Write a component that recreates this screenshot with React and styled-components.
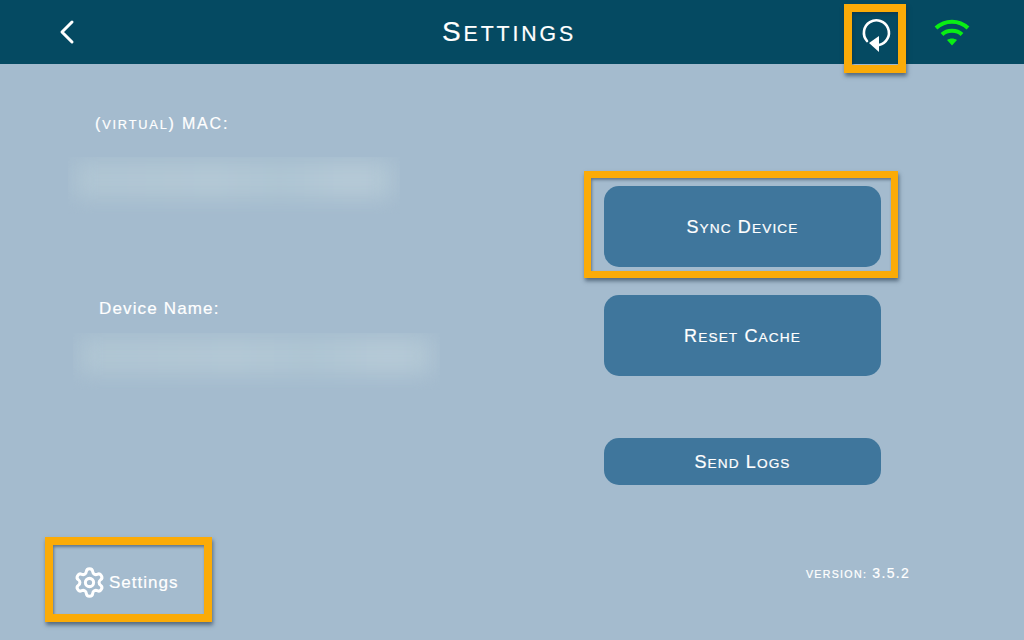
import styled, { createGlobalStyle } from "styled-components";
import { Settings as GearIcon } from "lucide-react";

const GlobalStyle = createGlobalStyle`
  html, body {
    margin: 0;
    padding: 0;
    background: #a4bbce;
  }
  body {
    font-family: "Liberation Sans", Arial, sans-serif;
    color: #fff;
    -webkit-text-stroke: 0.2px #fff;
  }
`;

const Page = styled.div`
  width: 1024px;
  height: 640px;
  overflow: hidden;
  background: #a4bbce;
`;

const Header = styled.header`
  display: flex;
  align-items: center;
  height: 64px;
  padding: 0 54px 0 57px;
  background: #054a62;
`;

const BackButton = styled.div`
  display: flex;
  width: 22px;
  height: 28px;
`;

const Title = styled.h1`
  flex: 1;
  margin: 0;
  padding-left: 79px;
  text-align: center;
  font-size: 28px;
  font-weight: 400;
  letter-spacing: 2.9px;
`;

// small capitals a bit larger than the browser's synthesized ones
const Small = styled.span`
  font-size: ${(props) => props.$scale || 0.76}em;
  text-transform: uppercase;
`;

const Actions = styled.div`
  display: flex;
  align-items: center;
  gap: 42px;
`;

const Anchor = styled.div`
  position: relative;
  display: flex;
`;

const Highlight = styled.div`
  position: absolute;
  inset: ${(props) => props.$inset};
  border: ${(props) => props.$border || 8}px solid #fbab07;
  box-shadow: 1px 3px 4px rgba(20, 40, 60, 0.55),
    inset 1px 2px 3px rgba(20, 40, 60, 0.45);
  pointer-events: none;
`;

const Main = styled.main`
  display: flex;
  height: 576px;
`;

const LeftColumn = styled.section`
  display: flex;
  flex-direction: column;
  width: 604px;
`;

const Label = styled.div`
  margin: ${(props) => props.$margin};
  font-size: ${(props) => props.$size}px;
  line-height: 20px;
  letter-spacing: ${(props) => props.$spacing}px;
`;

const BlurClip = styled.div`
  overflow: hidden;
  width: ${(props) => props.$width}px;
  height: 57px;
  margin: ${(props) => props.$margin};
`;

const BlurBar = styled.div`
  height: 38px;
  margin: 4px 6px 0;
  background: linear-gradient(
    90deg,
    #afc5d3 0%,
    #b3c8d5 45%,
    #aec5d3 65%,
    #b6cad7 88%,
    #afc5d3 100%
  );
  filter: blur(10px);
`;

const SettingsLink = styled.div`
  position: relative;
  display: flex;
  align-items: center;
  gap: 3px;
  width: 104px;
  margin: auto 0 41px 75px;
  font-size: 17px;
  letter-spacing: 1px;

  svg {
    margin-left: -2px;
  }
`;

const RightColumn = styled.section`
  display: flex;
  flex-direction: column;
  width: 277px;
  padding-top: 122px;
`;

const ActionButton = styled.div`
  display: flex;
  align-items: baseline;
  justify-content: center;
  width: 277px;
  height: ${(props) => props.$height}px;
  line-height: ${(props) => props.$height + 2}px;
  margin: ${(props) => props.$margin || 0};
  background: #3f769c;
  border-radius: 15px;
  font-size: 18px;
  letter-spacing: 1.1px;
  white-space: pre;
`;

const Version = styled.div`
  align-self: flex-end;
  margin: 78px -29px 0 0;
  font-size: 14px;
  line-height: 20px;
  letter-spacing: 1.3px;
`;

const RefreshIcon = () => (
  <svg width="32" height="40" viewBox="0 0 32 40" fill="none">
    <path
      d="M7 29 A12.5 12.5 0 1 1 19 33"
      stroke="#fff"
      strokeWidth="2.6"
      strokeLinecap="round"
    />
    <path d="M9 31 L19 24 L19 40 Z" fill="#fff" />
  </svg>
);

const WifiIcon = () => (
  <svg width="36" height="28" viewBox="0 0 36 28" fill="none">
    <path d="M2 10 C11 1.5 25 1.5 34 10" stroke="#0aee14" strokeWidth="4" />
    <path d="M8 16.5 C13 11.5 23 11.5 28 16.5" stroke="#0aee14" strokeWidth="4" />
    <path d="M13 22 C16 20 20 20 23 22 L18 27.5 Z" fill="#0aee14" />
  </svg>
);

export default function App() {
  return (
    <Page>
      <GlobalStyle />
      <Header>
        <BackButton>
          <svg width="22" height="28" viewBox="0 0 22 28" fill="none">
            <path
              d="M15 4 L5 14 L15 24"
              stroke="#fff"
              strokeWidth="3"
              strokeLinecap="round"
              strokeLinejoin="round"
            />
          </svg>
        </BackButton>
        <Title>
          S<Small>ettings</Small>
        </Title>
        <Actions>
          <Anchor>
            <RefreshIcon />
            <Highlight $inset="-8px -14px -21px -16px" />
          </Anchor>
          <WifiIcon />
        </Actions>
      </Header>
      <Main>
        <LeftColumn>
          <Label $margin="50px 0 0 95px" $size={16} $spacing={1.8}>
            (<Small $scale={0.8}>virtual</Small>) MAC:
          </Label>
          <BlurClip $width={332} $margin="22px 0 0 68px">
            <BlurBar />
          </BlurClip>
          <Label $margin="85px 0 0 99px" $size={17} $spacing={1.15}>
            Device Name:
          </Label>
          <BlurClip $width={367} $margin="14px 0 0 73px">
            <BlurBar />
          </BlurClip>
          <SettingsLink>
            <GearIcon size={33} strokeWidth={2.2} />
            Settings
            <Highlight $inset="-29px -33px -23px -30px" />
          </SettingsLink>
        </LeftColumn>
        <RightColumn>
          <Anchor>
            <ActionButton $height={81}>
              S<Small>ync</Small> D<Small>evice</Small>
            </ActionButton>
            <Highlight $border={7} $inset="-15px -17px -11px -20px" />
          </Anchor>
          <ActionButton $height={81} $margin="28px 0 62px">
            R<Small>eset</Small> C<Small>ache</Small>
          </ActionButton>
          <ActionButton $height={47}>
            S<Small>end</Small> L<Small>ogs</Small>
          </ActionButton>
          <Version>
            <Small>version:</Small> 3.5.2
          </Version>
        </RightColumn>
      </Main>
    </Page>
  );
}
